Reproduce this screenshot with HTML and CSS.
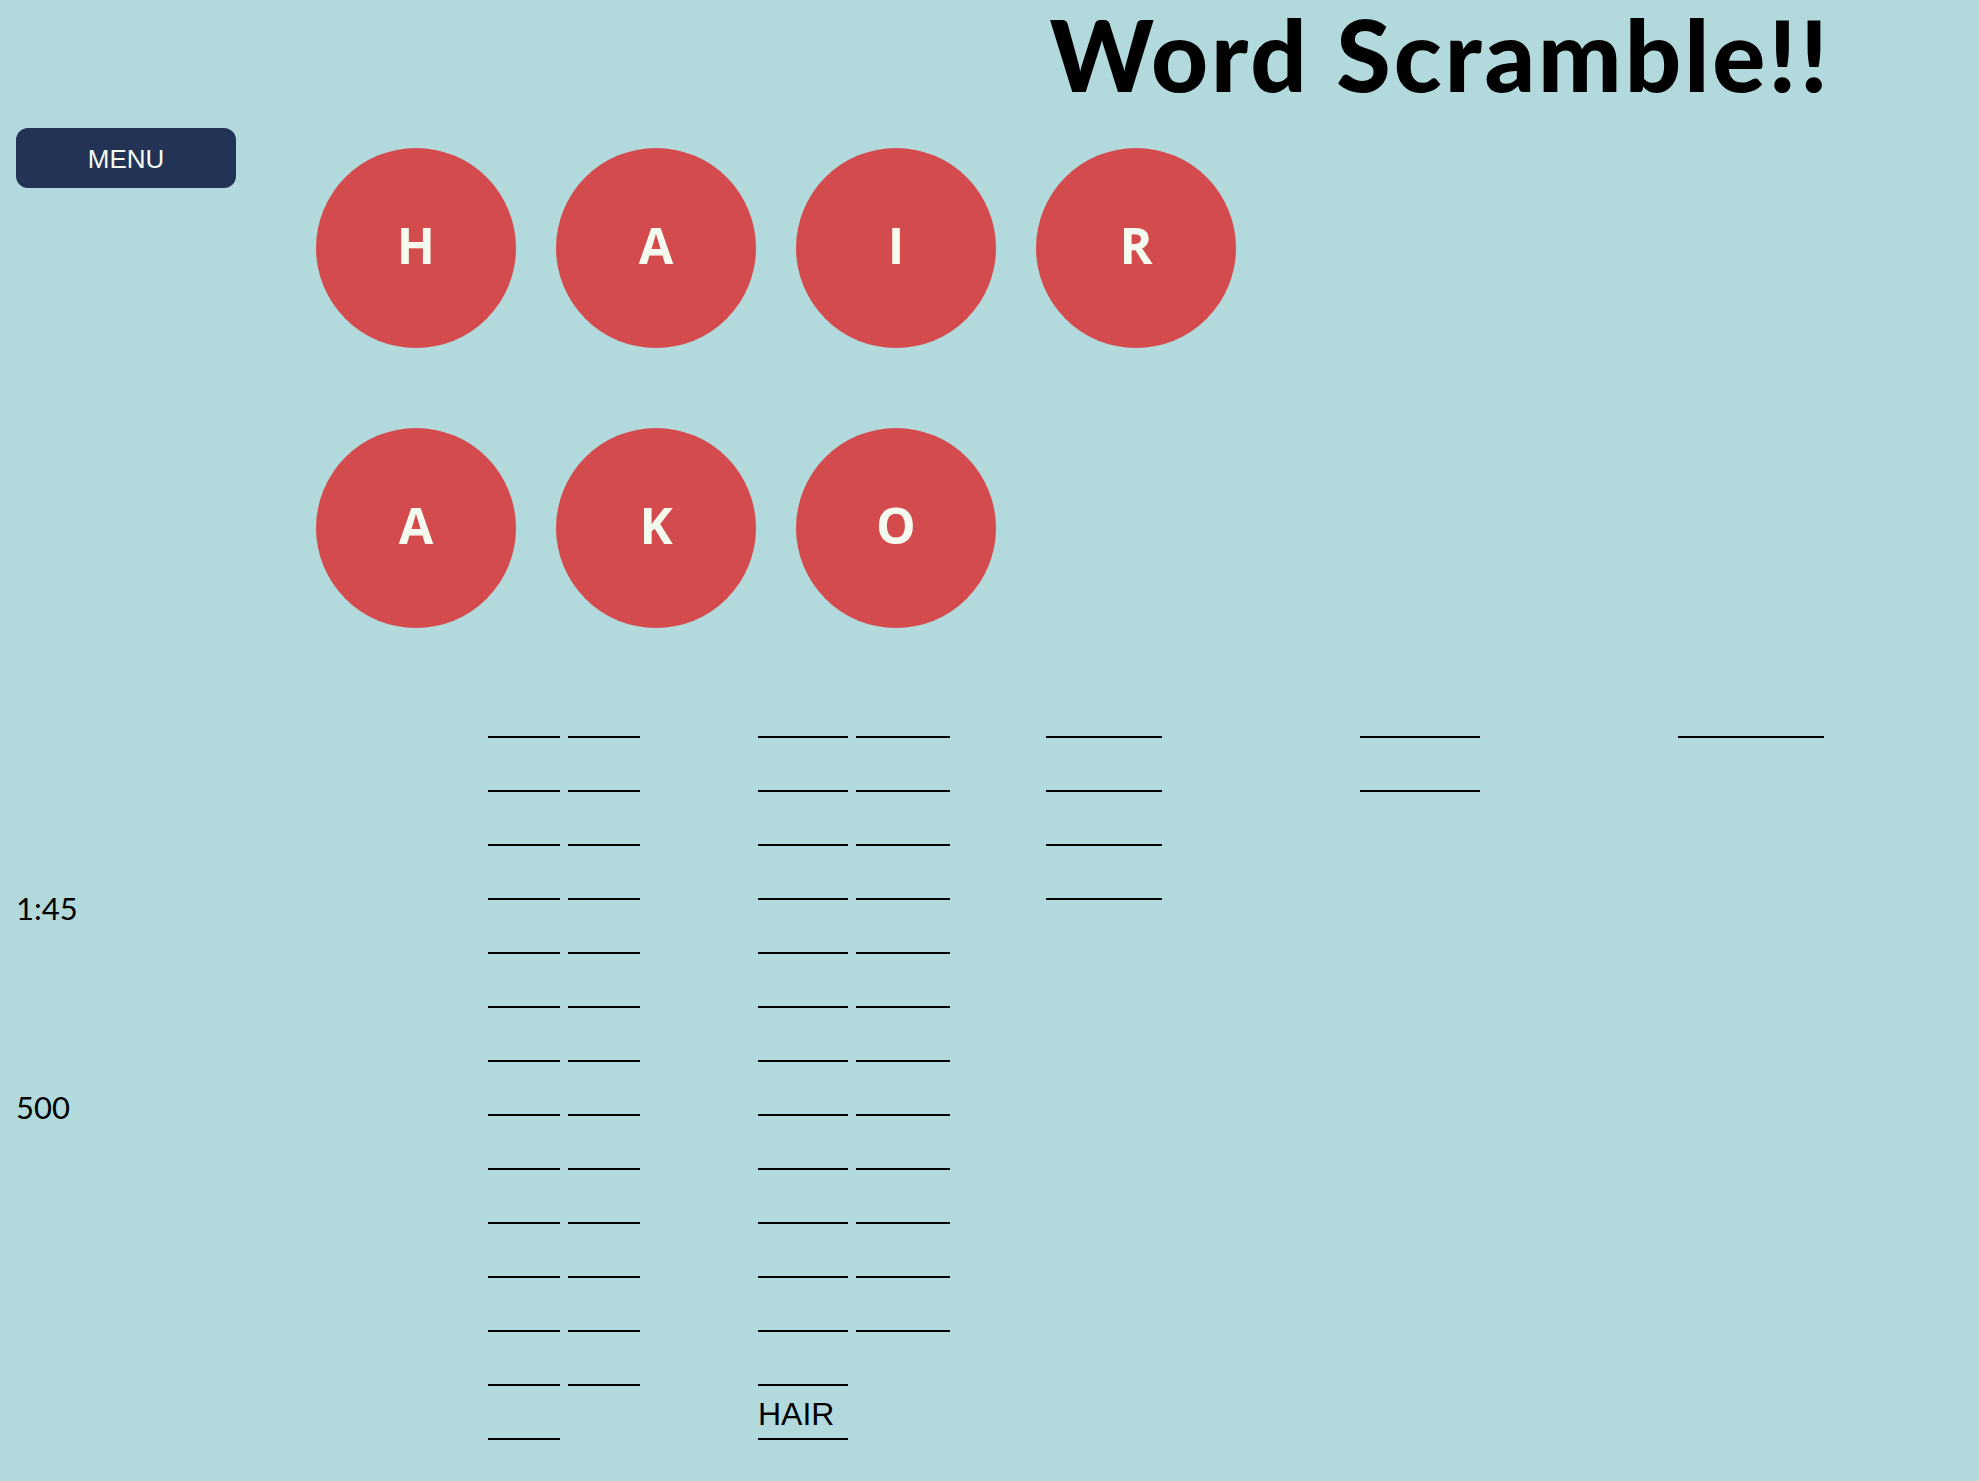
FILE: index.html
```html
<!DOCTYPE html>
<html lang="en">
<head>
<meta charset="utf-8">
<title>Word Scramble!!</title>
<link rel="stylesheet" href="styles.css">
</head>
<body>
<header class="top">
  <h1 class="title">Word Scramble!!</h1>
</header>
<div class="layout">
  <aside class="side">
    <button class="menu-btn">MENU</button>
    <div class="timer">1:45</div>
    <div class="score">500</div>
  </aside>
  <main class="board">
    <div class="tiles">
      <div class="tile">H</div>
      <div class="tile">A</div>
      <div class="tile">I</div>
      <div class="tile">R</div>
      <div class="tile">A</div>
      <div class="tile">K</div>
      <div class="tile">O</div>
    </div>
    <div class="words">
      <div class="group g3">
        <div class="slot"></div><div class="slot"></div><div class="slot"></div><div class="slot"></div><div class="slot"></div><div class="slot"></div><div class="slot"></div>
        <div class="slot"></div><div class="slot"></div><div class="slot"></div><div class="slot"></div><div class="slot"></div><div class="slot"></div><div class="slot"></div>
        <div class="slot"></div><div class="slot"></div><div class="slot"></div><div class="slot"></div><div class="slot"></div><div class="slot"></div><div class="slot"></div>
        <div class="slot"></div><div class="slot"></div><div class="slot"></div><div class="slot"></div><div class="slot"></div><div class="slot"></div>
      </div>
      <div class="group g4">
        <div class="slot"></div><div class="slot"></div><div class="slot"></div><div class="slot"></div><div class="slot"></div><div class="slot"></div><div class="slot"></div>
        <div class="slot"></div><div class="slot"></div><div class="slot"></div><div class="slot"></div><div class="slot"></div><div class="slot"></div>
        <div class="slot">HAIR</div>
        <div class="slot"></div><div class="slot"></div><div class="slot"></div><div class="slot"></div><div class="slot"></div><div class="slot"></div>
        <div class="slot"></div><div class="slot"></div><div class="slot"></div><div class="slot"></div><div class="slot"></div><div class="slot"></div>
      </div>
      <div class="group g5">
        <div class="slot"></div><div class="slot"></div><div class="slot"></div><div class="slot"></div>
      </div>
      <div class="group g6">
        <div class="slot"></div><div class="slot"></div>
      </div>
      <div class="group g7">
        <div class="slot"></div>
      </div>
    </div>
  </main>
</div>
</body>
</html>
```
FILE: styles.css
```css
* { box-sizing: border-box; }

html, body {
  margin: 0;
  padding: 0;
}

body {
  background: #b2dadd;
  color: #000;
  font-family: "Liberation Sans", Arial, sans-serif;
  min-height: 1481px;
}

.top {
  height: 128px;
  display: flex;
  justify-content: flex-end;
  padding-right: 148px;
}

.title {
  margin: 0;
  font-family: Lato, "Noto Sans", sans-serif;
  font-weight: 900;
  font-size: 99px;
  line-height: 1.1;
  letter-spacing: 3px;
}

.layout {
  display: flex;
  align-items: flex-start;
}

.side {
  width: 316px;
  flex: none;
  padding-left: 16px;
  display: flex;
  flex-direction: column;
  align-items: flex-start;
}

.menu-btn {
  width: 220px;
  height: 60px;
  border: none;
  border-radius: 12px;
  background: #233356;
  color: #f5fbef;
  font-family: "Liberation Sans", Arial, sans-serif;
  font-size: 26px;
  padding: 2px 0 0 0;
  cursor: pointer;
}

.timer, .score {
  font-family: Lato, "Noto Sans", sans-serif;
  font-size: 31px;
  line-height: 36px;
}

.timer { margin-top: 702px; }
.score { margin-top: 163px; }

.board {
  padding-top: 20px;
}

.tiles {
  display: grid;
  grid-template-columns: repeat(4, 200px);
  column-gap: 40px;
  row-gap: 80px;
}

.tile {
  width: 200px;
  height: 200px;
  border-radius: 50%;
  background: #d44b4e;
  color: #f4faee;
  display: flex;
  align-items: center;
  justify-content: center;
  font-family: "Open Sans", sans-serif;
  font-weight: 700;
  font-size: 50px;
  padding-bottom: 6px;
}

.words {
  display: flex;
  align-items: flex-start;
  gap: 198px;
  margin-top: 66px;
  margin-left: 172px;
}

.group {
  display: grid;
  grid-auto-flow: column;
  grid-template-rows: repeat(14, 44px);
  row-gap: 10px;
  column-gap: 8px;
}

.g3 { width: 72px; grid-template-columns: 72px 72px; }
.g4 { width: 90px; grid-template-columns: 90px 94px; }
.g5 { width: 116px; grid-template-columns: 116px; }
.g6 { width: 120px; grid-template-columns: 120px; }
.g7 { width: 146px; grid-template-columns: 146px; }

.slot {
  height: 44px;
  border-bottom: 2px solid #000;
  font-family: "Liberation Sans", Arial, sans-serif;
  font-size: 32px;
  line-height: normal;
  white-space: nowrap;
}
```
